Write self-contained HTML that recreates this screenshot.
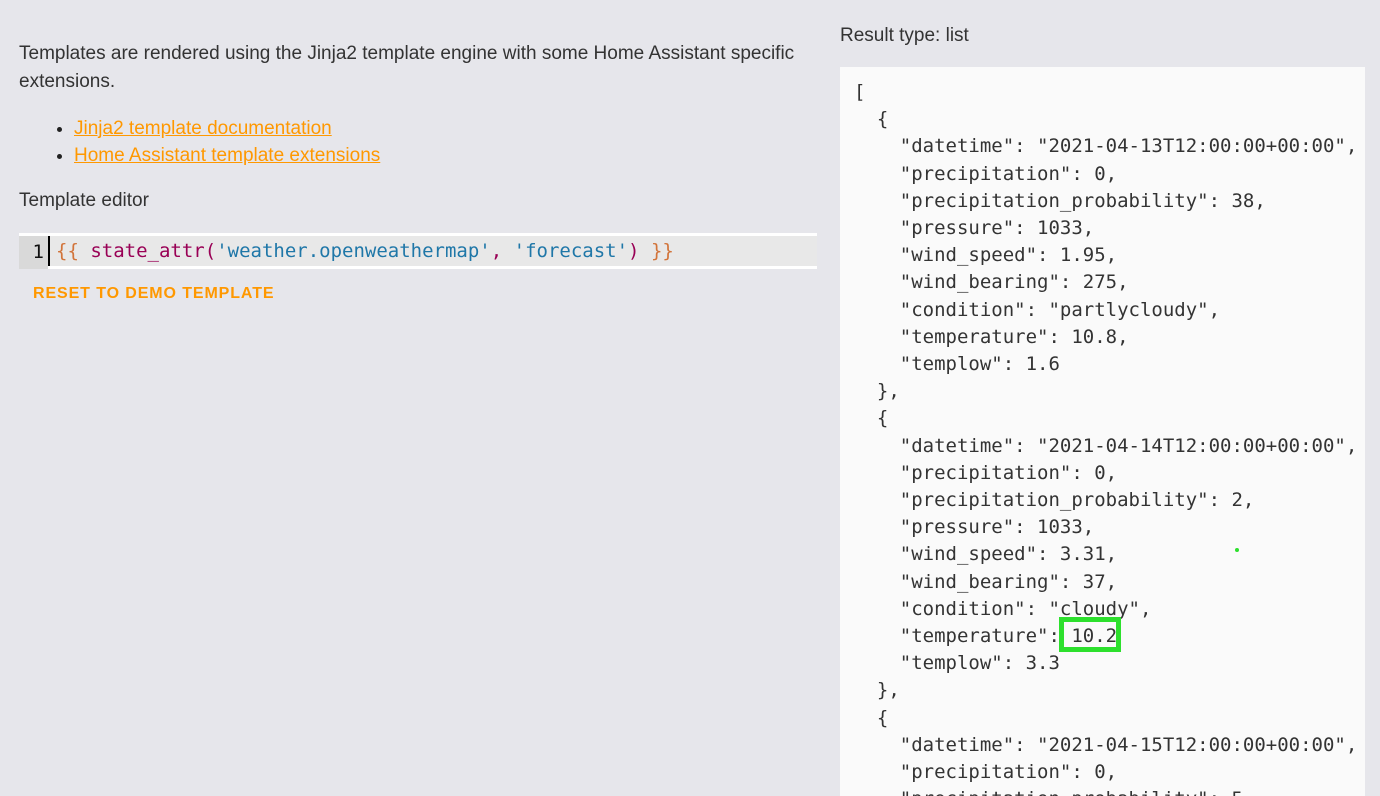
<!DOCTYPE html>
<html><head><style>
body{margin:0;width:1380px;height:796px;background:#e6e6eb;font-family:"Liberation Sans",sans-serif;overflow:hidden;position:relative;color:#212121}
.p{position:absolute;left:19px;top:40px;width:800px;font-size:19px;line-height:28px;color:#333}
ul{position:absolute;left:54px;top:115px;margin:0;padding:0 0 0 20px;font-size:19px;line-height:27px}
a{color:#ff9800;text-decoration:underline}
.te{position:absolute;left:19px;top:190px;font-size:19px;color:#333}
.ed{position:absolute;left:19px;top:233px;width:798px;height:36px;background:#fff}
.ed .g{position:absolute;left:0;top:3px;width:25px;padding-right:4px;height:33px;background:#d9d9d9;font-family:"DejaVu Sans Mono",monospace;font-size:19px;line-height:33px;text-align:right;color:#111}
.ed .c{position:absolute;left:29px;top:3px;right:0;height:30px;background:#e8e8e8;border-left:2px solid #000;font-family:"DejaVu Sans Mono",monospace;font-size:19px;line-height:30px;padding-left:6px;white-space:pre}
.o{color:#d2743a}.f{color:#990055}.s{color:#1f77a8}
.rs{position:absolute;left:33px;top:285px;font-size:16px;letter-spacing:0.9px;color:#ff9800;font-weight:bold}
.rt{position:absolute;left:840px;top:25px;font-size:19px;color:#333}
.box{position:absolute;left:840px;top:67px;width:525px;height:729px;background:#fafafa;overflow:hidden}
pre{margin:0;position:absolute;left:14px;top:12px;font-family:"DejaVu Sans Mono",monospace;font-size:19px;line-height:27.2px;color:#333}
.hl{position:absolute;left:1059px;top:617px;width:62px;height:35px;border:5px solid #2de02d;box-sizing:border-box}
.dot{position:absolute;left:1235px;top:548px;width:4px;height:4px;border-radius:2px;background:#2de02d}
</style></head><body>
<div class="p">Templates are rendered using the Jinja2 template engine with some Home Assistant specific extensions.</div>
<ul><li><a>Jinja2 template documentation</a></li><li><a>Home Assistant template extensions</a></li></ul>
<div class="te">Template editor</div>
<div class="ed"><div class="g">1</div><div class="c"><span class="o">{{</span> <span class="f">state_attr(</span><span class="s">'weather.openweathermap'</span><span class="f">,</span> <span class="s">'forecast'</span><span class="f">)</span> <span class="o">}}</span></div></div>
<div class="rs">RESET TO DEMO TEMPLATE</div>
<div class="rt">Result type: list</div>
<div class="box"><pre>[
  {
    "datetime": "2021-04-13T12:00:00+00:00",
    "precipitation": 0,
    "precipitation_probability": 38,
    "pressure": 1033,
    "wind_speed": 1.95,
    "wind_bearing": 275,
    "condition": "partlycloudy",
    "temperature": 10.8,
    "templow": 1.6
  },
  {
    "datetime": "2021-04-14T12:00:00+00:00",
    "precipitation": 0,
    "precipitation_probability": 2,
    "pressure": 1033,
    "wind_speed": 3.31,
    "wind_bearing": 37,
    "condition": "cloudy",
    "temperature": 10.2
    "templow": 3.3
  },
  {
    "datetime": "2021-04-15T12:00:00+00:00",
    "precipitation": 0,
    "precipitation_probability": 5,
</pre></div>
<div class="hl"></div><div class="dot"></div>
</body></html>
